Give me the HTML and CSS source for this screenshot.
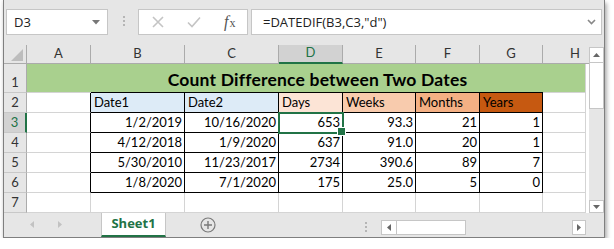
FILE: index.html
```html
<!DOCTYPE html>
<html>
<head>
  <title>DATEDIF - Excel</title>
  <link rel="stylesheet" href="styles.css">
</head>
<body>
  <div class="window">
    <div class="toolbar">
      <div class="namebox">
        <span>D3</span>
        <svg width="8" height="5" viewBox="0 0 8 5"><polygon points="0,0 8,0 4,4.5" fill="#777"/></svg>
      </div>
      <div class="grip"><i></i><i></i><i></i></div>
      <div class="fxbox">
        <svg class="ico" width="12" height="12" viewBox="0 0 12 12"><path d="M1 1 L11 11 M11 1 L1 11" stroke="#c4c4c4" stroke-width="1.6" fill="none"/></svg>
        <svg class="ico" width="14" height="12" viewBox="0 0 14 12"><path d="M1 6.5 L5 10.5 L13 1.5" stroke="#c4c4c4" stroke-width="1.6" fill="none"/></svg>
        <span class="fx"><i>f</i><i class="x">x</i></span>
      </div>
      <div class="formula">
        <span>=DATEDIF(B3,C3,"d")</span>
        <svg width="9" height="6" viewBox="0 0 9 6"><path d="M1 1 L4.5 4.5 L8 1" stroke="#888" stroke-width="1.6" fill="none"/></svg>
      </div>
    </div>

    <div class="sheet">
      <div class="grid">
        <!-- column headers -->
        <div class="corner"><svg width="12" height="12" viewBox="0 0 12 12"><polygon points="12,0 12,12 0,12" fill="#bdbdbd"/></svg></div>
        <div class="ch">A</div>
        <div class="ch">B</div>
        <div class="ch">C</div>
        <div class="ch sel">D</div>
        <div class="ch">E</div>
        <div class="ch">F</div>
        <div class="ch">G</div>
        <div class="ch last">H</div>

        <!-- row 1 -->
        <div class="rh">1</div>
        <div class="c green"></div>
        <div class="c green title">Count Difference between Two Dates</div>
        <div class="c green gh"></div>
        <div class="end"></div>

        <!-- row 2 -->
        <div class="rh">2</div>
        <div class="c la"></div>
        <div class="c tb blue">Date1</div>
        <div class="c tb blue">Date2</div>
        <div class="c tb days">Days</div>
        <div class="c tb weeks">Weeks</div>
        <div class="c tb months">Months</div>
        <div class="c tb years">Years</div>
        <div class="c"></div>
        <div class="end"></div>

        <!-- row 3 -->
        <div class="rh sel">3</div>
        <div class="c la"></div>
        <div class="c tb n">1/2/2019</div>
        <div class="c tb n">10/16/2020</div>
        <div class="c tb n act">653</div>
        <div class="c tb n">93.3</div>
        <div class="c tb n">21</div>
        <div class="c tb n">1</div>
        <div class="c"></div>
        <div class="end"></div>

        <!-- row 4 -->
        <div class="rh">4</div>
        <div class="c la"></div>
        <div class="c tb n">4/12/2018</div>
        <div class="c tb n">1/9/2020</div>
        <div class="c tb n">637</div>
        <div class="c tb n">91.0</div>
        <div class="c tb n">20</div>
        <div class="c tb n">1</div>
        <div class="c"></div>
        <div class="end"></div>

        <!-- row 5 -->
        <div class="rh">5</div>
        <div class="c la"></div>
        <div class="c tb n">5/30/2010</div>
        <div class="c tb n">11/23/2017</div>
        <div class="c tb n">2734</div>
        <div class="c tb n">390.6</div>
        <div class="c tb n">89</div>
        <div class="c tb n">7</div>
        <div class="c"></div>
        <div class="end"></div>

        <!-- row 6 -->
        <div class="rh">6</div>
        <div class="c la"></div>
        <div class="c tb n">1/8/2020</div>
        <div class="c tb n">7/1/2020</div>
        <div class="c tb n">175</div>
        <div class="c tb n">25.0</div>
        <div class="c tb n">5</div>
        <div class="c tb n">0</div>
        <div class="c"></div>
        <div class="end"></div>

        <!-- row 7 -->
        <div class="rh">7</div>
        <div class="c"></div>
        <div class="c"></div>
        <div class="c"></div>
        <div class="c"></div>
        <div class="c"></div>
        <div class="c"></div>
        <div class="c"></div>
        <div class="c"></div>
        <div class="end"></div>
      </div>

      <div class="vscroll">
        <div class="sbtn up"><svg width="7" height="4" viewBox="0 0 7 4"><polygon points="0,4 7,4 3.5,0" fill="#666"/></svg></div>
        <div class="vthumb"></div>
        <div class="track"></div>
        <div class="sbtn down"><svg width="7" height="4" viewBox="0 0 7 4"><polygon points="0,0 7,0 3.5,4" fill="#666"/></svg></div>
      </div>
    </div>

    <div class="tabbar">
      <div class="nav">
        <svg width="4" height="7" viewBox="0 0 4 7"><polygon points="4,0 4,7 0,3.5" fill="#c2c2c2"/></svg>
        <svg width="4" height="7" viewBox="0 0 4 7"><polygon points="0,0 0,7 4,3.5" fill="#c2c2c2"/></svg>
      </div>
      <div class="tab">Sheet1</div>
      <svg class="plus" width="16" height="16" viewBox="0 0 16 16">
        <circle cx="8" cy="8" r="7" stroke="#7a7a7a" stroke-width="1.2" fill="none"/>
        <path d="M8 4 V12 M4 8 H12" stroke="#7a7a7a" stroke-width="1.4"/>
      </svg>
      <div class="grip grip2"><i></i><i></i><i></i></div>
      <div class="hscroll">
        <div class="sbtn left"><svg width="4" height="7" viewBox="0 0 4 7"><polygon points="4,0 4,7 0,3.5" fill="#666"/></svg></div>
        <div class="hthumb"></div>
        <div class="track"></div>
        <div class="sbtn right"><svg width="4" height="7" viewBox="0 0 4 7"><polygon points="0,0 0,7 4,3.5" fill="#666"/></svg></div>
      </div>
    </div>
  </div>
</body>
</html>
```

FILE: styles.css
```css
* {
  box-sizing: border-box;
}
body {
  margin: 0;
  background: #fff;
}
.window {
  width: 602px;
  height: 238px;
  margin-left: 3px;
  background: #e6e6e6;
  border: 1px solid #7f7f7f;
  border-top: none;
  box-shadow: 2px 3px 4px rgba(0,0,0,0.3), -1px 0 3px rgba(0,0,0,0.08);
  display: flex;
  flex-direction: column;
}

/* formula bar */
.toolbar {
  height: 45px;
  display: flex;
  align-items: flex-start;
  padding: 9px 0 0 2px;
  font-family: "Open Sans", sans-serif;
  font-size: 13px;
  color: #222;
}
.namebox {
  width: 102px;
  height: 26px;
  background: #fff;
  border: 1px solid #c6c6c6;
  display: flex;
  align-items: center;
  justify-content: space-between;
  padding: 0 7px 0 7px;
}
.grip {
  display: flex;
  flex-direction: column;
  gap: 2px;
  margin: 7px 13px 0 15px;
}
.grip i {
  display: block;
  width: 2px;
  height: 2px;
  background: #b5b5b5;
}
.fxbox {
  width: 110px;
  height: 26px;
  background: #fff;
  border: 1px solid #c6c6c6;
  display: flex;
  align-items: center;
  padding-left: 13px;
}
.fxbox .ico + .ico {
  margin-left: 23px;
}
.fx {
  margin-left: 23px;
  font-family: "Liberation Serif", serif;
  font-size: 16px;
  color: #555;
}
.fx .x {
  font-size: 12px;
  font-style: normal;
  margin-left: 1px;
}
.formula {
  width: 351px;
  height: 26px;
  margin-left: 3px;
  background: #fff;
  border: 1px solid #c6c6c6;
  display: flex;
  align-items: center;
  justify-content: space-between;
  padding: 0 5px 0 11px;
}

/* sheet grid */
.sheet {
  height: 168px;
  display: flex;
}
.grid {
  width: 585px;
  display: grid;
  grid-template-columns: 23px 64px 94px 94px 64px 73px 64px 63px 43px 3px;
  grid-template-rows: 19px 29px repeat(6, 20px);
  background: #fff;
  font-family: Lato, sans-serif;
  font-size: 13px;
  color: #000;
}
.corner, .ch, .rh {
  background: #e6e6e6;
  color: #333;
  display: flex;
  justify-content: center;
  align-items: flex-end;
  line-height: 15px;
}
.corner {
  border-right: 1px solid #ababab;
  border-bottom: 1px solid #ababab;
  justify-content: flex-end;
  padding: 0 3px 2px 0;
}
.ch {
  border-right: 1px solid #ababab;
  border-bottom: 1px solid #ababab;
  padding-bottom: 2px;
}
.ch.last {
  grid-column: span 2;
  border-right: none;
  justify-content: flex-end;
  padding-right: 9px;
}
.rh {
  border-right: 1px solid #ababab;
  border-bottom: 1px solid #c8c8c8;
  padding-bottom: 2px;
}
.ch.sel {
  background: #d2d2d2;
  color: #217346;
  border-bottom: 2px solid #217346;
}
.rh.sel {
  background: #d2d2d2;
  color: #217346;
  border-right: 2px solid #217346;
}
.c {
  border-right: 1px solid #d4d4d4;
  border-bottom: 1px solid #d4d4d4;
  display: flex;
  align-items: flex-end;
  padding: 0 2px 2px 3px;
  line-height: 15px;
  white-space: nowrap;
}
.n {
  justify-content: flex-end;
}
.end {
  background: #fff;
}
.la {
  border-right-color: #000;
}
.tb {
  border-color: #000;
}

/* title row */
.green {
  background: #a9d08e;
  border-right: none;
}
.green.gh {
  border-right: 1px solid #d4d4d4;
}
.title {
  grid-column: span 6;
  border-bottom-color: #000;
  justify-content: center;
  font-weight: bold;
  font-size: 17.5px;
  letter-spacing: 0.2px;
  line-height: 20px;
  padding-bottom: 2px;
}

/* header fills */
.blue { background: #ddebf7; }
.days { background: #fce4d6; }
.weeks { background: #f8cbad; }
.months { background: #f4b084; }
.years { background: #c65911; }

/* active cell */
.act {
  position: relative;
  outline: 2px solid #217346;
  outline-offset: -1px;
}
.act::after {
  content: "";
  position: absolute;
  right: -4px;
  bottom: -4px;
  width: 7px;
  height: 7px;
  background: #217346;
  border: 1px solid #fff;
}

/* scrollbars */
.vscroll {
  width: 15px;
  display: flex;
  flex-direction: column;
  padding-top: 2px;
  background: #e6e6e6;
}
.sbtn {
  background: #fff;
  border: 1px solid #c6c6c6;
  display: flex;
  align-items: center;
  justify-content: center;
}
.up {
  height: 16px;
}
.vthumb {
  height: 46px;
  background: #fff;
  border: 1px solid #c6c6c6;
  border-top: none;
}
.track {
  flex: 1;
}
.down {
  height: 13px;
}

/* sheet tabs */
.tabbar {
  height: 24px;
  display: flex;
  align-items: flex-start;
}
.nav {
  width: 97px;
  height: 24px;
  display: flex;
  align-items: center;
  gap: 24px;
  padding: 0 0 2px 26px;
}
.tab {
  width: 65px;
  height: 24px;
  background: #fff;
  border-left: 1px solid #c6c6c6;
  border-right: 1px solid #c6c6c6;
  border-bottom: 2px solid #217346;
  color: #217346;
  font-family: "Open Sans", sans-serif;
  font-weight: bold;
  font-size: 13px;
  text-align: center;
  line-height: 21px;
}
.plus {
  margin: 4px 0 0 34px;
}
.grip2 {
  margin: 9px 0 0 149px;
}
.hscroll {
  width: 205px;
  height: 15px;
  margin: 7px 0 0 14px;
  display: flex;
}
.left {
  width: 16px;
}
.hthumb {
  width: 69px;
  background: #fff;
  border: 1px solid #c6c6c6;
  border-left: none;
}
.right {
  width: 14px;
}
```
